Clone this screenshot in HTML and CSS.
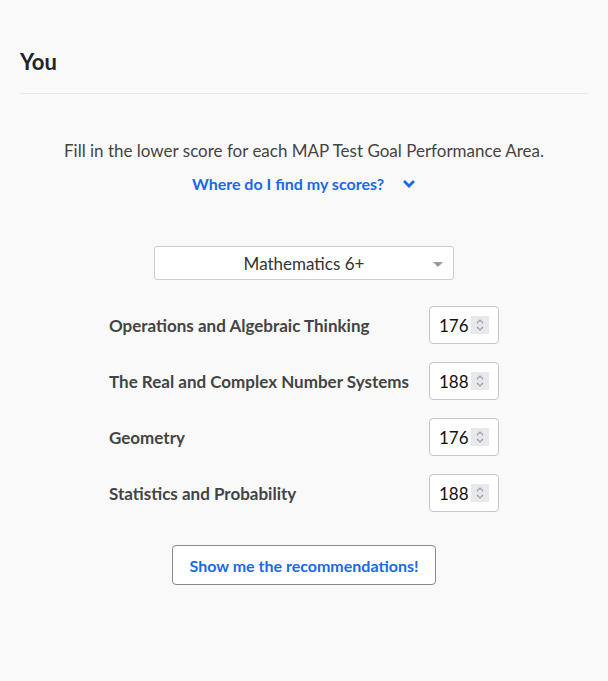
FILE: index.html
```html
<!DOCTYPE html>
<html lang="en">
<head>
    <meta charset="UTF-8">
    <meta name="viewport" content="width=device-width, initial-scale=1.0">
    <title>You</title>
    <link rel="stylesheet" href="styles.css">
</head>
<body>
    <div id="panel">
        <h2 class="title">You</h2>

        <p class="intro">Fill in the lower score for each MAP Test Goal Performance Area.</p>
        <a class="help" href="#">Where do I find my scores?
            <svg class="chev" width="14" height="10" viewBox="0 0 14 10"><path d="M2 2 L7 7 L12 2" fill="none" stroke="#1a6ae6" stroke-width="2.8"/></svg>
        </a>

        <div class="select">
            <span>Mathematics 6+</span>
            <span class="caret"></span>
        </div>

        <div class="scores">
            <div class="row">
                <label>Operations and Algebraic Thinking</label>
                <div class="num"><input type="text" value="176"><span class="spin"><svg width="10" height="14" viewBox="0 0 10 14"><path d="M2 5 L5 2 L8 5 M2 9 L5 12 L8 9" fill="none" stroke="#9a9aa0" stroke-width="1.1"/></svg></span></div>
            </div>
            <div class="row">
                <label>The Real and Complex Number Systems</label>
                <div class="num"><input type="text" value="188"><span class="spin"><svg width="10" height="14" viewBox="0 0 10 14"><path d="M2 5 L5 2 L8 5 M2 9 L5 12 L8 9" fill="none" stroke="#9a9aa0" stroke-width="1.1"/></svg></span></div>
            </div>
            <div class="row">
                <label>Geometry</label>
                <div class="num"><input type="text" value="176"><span class="spin"><svg width="10" height="14" viewBox="0 0 10 14"><path d="M2 5 L5 2 L8 5 M2 9 L5 12 L8 9" fill="none" stroke="#9a9aa0" stroke-width="1.1"/></svg></span></div>
            </div>
            <div class="row">
                <label>Statistics and Probability</label>
                <div class="num"><input type="text" value="188"><span class="spin"><svg width="10" height="14" viewBox="0 0 10 14"><path d="M2 5 L5 2 L8 5 M2 9 L5 12 L8 9" fill="none" stroke="#9a9aa0" stroke-width="1.1"/></svg></span></div>
            </div>
        </div>

        <button class="go">Show me the recommendations!</button>
    </div>
</body>
</html>
```

FILE: styles.css
```css
body {
    margin: 0;
    background-color: #f9f9f9;
    font-family: Lato, "Open Sans", sans-serif;
    color: #444;
}
#panel {
    padding: 0 20px;
    display: flex;
    flex-direction: column;
    align-items: center;
}
.title {
    align-self: stretch;
    margin: 0;
    padding: 48px 0 18px;
    font-size: 22px;
    font-weight: 700;
    color: #222228;
    border-bottom: 1px solid #e6e6e6;
}
.intro {
    margin: 47px 0 0;
    font-size: 17px;
    line-height: 20px;
}
.help {
    margin-top: 13px;
    display: flex;
    align-items: center;
    gap: 18px;
    color: #1a6ae6;
    font-weight: 700;
    font-size: 16px;
    text-decoration: none;
}
.select {
    margin-top: 53px;
    width: 298px;
    height: 32px;
    border: 1px solid #ccc;
    border-radius: 3px;
    background: #fff;
    display: flex;
    align-items: center;
    justify-content: center;
    position: relative;
    font-size: 17px;
    color: #333;
}
.caret {
    position: absolute;
    right: 10px;
    top: 15px;
    border-left: 5px solid transparent;
    border-right: 5px solid transparent;
    border-top: 5px solid #999;
}
.scores {
    margin-top: 26px;
    width: 390px;
    display: flex;
    flex-direction: column;
    gap: 18px;
}
.row {
    display: flex;
    align-items: center;
    justify-content: space-between;
}
.row label {
    font-weight: 700;
    font-size: 17px;
    color: #444;
}
.num {
    height: 36px;
    border: 1px solid #c8c8c8;
    border-radius: 4px;
    background: #fff;
    display: flex;
    align-items: center;
    padding-left: 9px;
    width: 59px;
}
.num input {
    width: 32px;
    border: none;
    padding: 0;
    background: transparent;
    font-family: Lato, sans-serif;
    font-size: 17px;
    color: #111;
    outline: none;
}
.spin {
    width: 18px;
    height: 18px;
    background: #e8e8ec;
    display: flex;
    align-items: center;
    justify-content: center;
}
.go {
    margin-top: 33px;
    width: 264px;
    height: 40px;
    border: 1px solid #888;
    border-radius: 4px;
    background: #fff;
    color: #1a6ae6;
    font-family: Lato, sans-serif;
    font-size: 16px;
    font-weight: 700;
    cursor: pointer;
}
```
